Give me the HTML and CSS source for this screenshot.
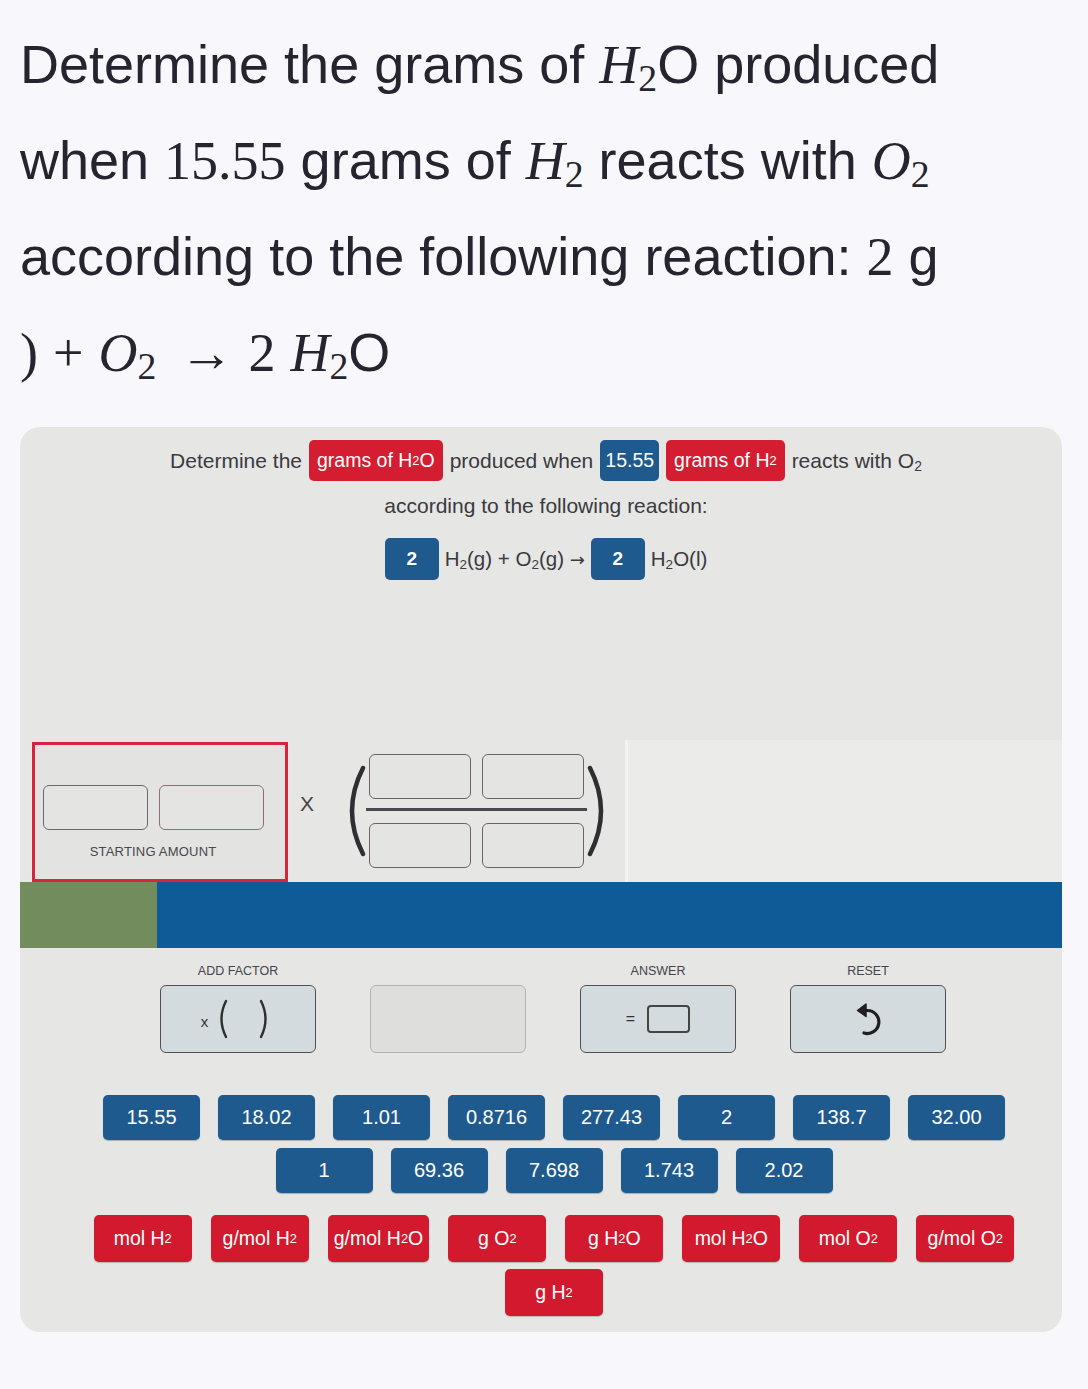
FILE: index.html
```html
<!DOCTYPE html>
<html>
<head>
<meta charset="utf-8">
<link rel="stylesheet" href="styles.css">
</head>
<body>
<div class="question">
  <div class="qline">Determine the grams of <span class="mi">H</span><span class="msub">2</span>O produced</div>
  <div class="qline">when <span class="mn">15.55</span> grams of <span class="mi">H</span><span class="msub">2</span> reacts with <span class="mi">O</span><span class="msub">2</span></div>
  <div class="qline">according to the following reaction: <span class="mn">2</span> g</div>
  <div class="qline"><span class="mn">)</span> <span class="mn">+</span> <span class="mi">O</span><span class="msub">2</span> <span class="mn arrow">→</span> <span class="mn">2</span> <span class="mi">H</span><span class="msub">2</span>O</div>
</div>

<div class="card">
  <div class="problem">
    <div class="sentence">
      <span>Determine the</span>
      <span class="chip red">grams of H<span class="sb">2</span>O</span>
      <span>produced when</span>
      <span class="chip blue num">15.55</span>
      <span class="chip red">grams of H<span class="sb">2</span></span>
      <span>reacts with O<span class="sb">2</span></span>
    </div>
    <div class="according">according to the following reaction:</div>
    <div class="equation">
      <span class="chip blue coef">2</span>
      <span>H<span class="sb">2</span>(g) + O<span class="sb">2</span>(g) <span class="eqarrow">→</span></span>
      <span class="chip blue coef">2</span>
      <span>H<span class="sb">2</span>O(l)</span>
    </div>
  </div>

  <div class="work">
    <div class="start">
      <div class="start-boxes">
        <div class="slot"></div>
        <div class="slot slot-red"></div>
      </div>
      <div class="start-label">STARTING AMOUNT</div>
    </div>
    <div class="times">X</div>
    <div class="factor">
      <svg class="paren" viewBox="0 0 30 92" width="30" height="92"><path d="M25 3 Q3 46 25 89" fill="none" stroke="#2f2f33" stroke-width="4.5" stroke-linecap="round"/></svg>
      <div class="fraction">
        <div class="frow"><div class="slot fslot"></div><div class="slot fslot"></div></div>
        <div class="fline"></div>
        <div class="frow"><div class="slot fslot"></div><div class="slot fslot"></div></div>
      </div>
      <svg class="paren" viewBox="0 0 30 92" width="30" height="92"><path d="M5 3 Q27 46 5 89" fill="none" stroke="#2f2f33" stroke-width="4.5" stroke-linecap="round"/></svg>
    </div>
    <div class="panel"></div>
  </div>

  <div class="bar">
    <div class="bar-green"></div>
    <div class="bar-blue"></div>
  </div>

  <div class="controls">
    <div class="ctl">
      <div class="ctl-label">ADD FACTOR</div>
      <div class="ctl-btn"><span class="small-x">x</span><svg class="bp" width="12" height="40" viewBox="0 0 12 40"><path d="M10 2 Q1 20 10 38" fill="none" stroke="#2e2e31" stroke-width="2.4" stroke-linecap="round"/></svg><svg class="bp bp-r" width="12" height="40" viewBox="0 0 12 40"><path d="M2 2 Q11 20 2 38" fill="none" stroke="#2e2e31" stroke-width="2.4" stroke-linecap="round"/></svg></div>
    </div>
    <div class="ctl">
      <div class="ctl-label"></div>
      <div class="ctl-btn blank"></div>
    </div>
    <div class="ctl">
      <div class="ctl-label">ANSWER</div>
      <div class="ctl-btn"><span class="eq">=</span><span class="ans-box"></span></div>
    </div>
    <div class="ctl">
      <div class="ctl-label">RESET</div>
      <div class="ctl-btn">
        <svg class="reset" width="32" height="40" viewBox="0 0 32 40"><path d="M10 10.5 H15 A11.5 11.5 0 1 1 12 33" fill="none" stroke="#1f1f22" stroke-width="3.2" stroke-linecap="round"/><path d="M14 4 L5.5 10.5 L14 16.5 Z" fill="#1f1f22" stroke="#1f1f22" stroke-width="1.5" stroke-linejoin="round"/></svg>
      </div>
    </div>
  </div>

  <div class="tiles">
    <div class="trow">
      <span class="tile blue">15.55</span><span class="tile blue">18.02</span><span class="tile blue">1.01</span><span class="tile blue">0.8716</span><span class="tile blue">277.43</span><span class="tile blue">2</span><span class="tile blue">138.7</span><span class="tile blue">32.00</span>
    </div>
    <div class="trow">
      <span class="tile blue">1</span><span class="tile blue">69.36</span><span class="tile blue">7.698</span><span class="tile blue">1.743</span><span class="tile blue">2.02</span>
    </div>
    <div class="trow red-row">
      <span class="tile red">mol H<span class="sb">2</span></span><span class="tile red">g/mol H<span class="sb">2</span></span><span class="tile red">g/mol H<span class="sb">2</span>O</span><span class="tile red">g O<span class="sb">2</span></span><span class="tile red">g H<span class="sb">2</span>O</span><span class="tile red">mol H<span class="sb">2</span>O</span><span class="tile red">mol O<span class="sb">2</span></span><span class="tile red">g/mol O<span class="sb">2</span></span>
    </div>
    <div class="trow red-row2">
      <span class="tile red">g H<span class="sb">2</span></span>
    </div>
  </div>
</div>
</body>
</html>
```

FILE: styles.css
```css
* { box-sizing: border-box; }
body {
  margin: 0;
  background: #f8f8fc;
  font-family: "Liberation Sans", Arial, sans-serif;
  color: #25242f;
}
.question {
  padding: 16px 0 0 20px;
  font-size: 54px;
  line-height: 96px;
}
.qline { white-space: nowrap; height: 96px; }
.mi { font-family: "Liberation Serif", serif; font-style: italic; }
.mn { font-family: "Liberation Serif", serif; }
.msub {
  font-family: "Liberation Serif", serif;
  font-size: 0.7em;
  vertical-align: -0.22em;
  line-height: 0;
}
.arrow { margin-left: 8px; }

.card {
  margin: 27px 0 0 20px;
  width: 1042px;
  background: #e6e6e4;
  border-radius: 20px;
  overflow: hidden;
  padding-bottom: 16px;
  color: #3a3a40;
}
.sb { font-size: 0.66em; vertical-align: -0.25em; line-height: 0; }

.problem {
  height: 313px;
  padding: 13px 0 0 10px;
  font-size: 21px;
}
.sentence, .equation {
  display: flex;
  justify-content: center;
  align-items: center;
  gap: 7px;
  white-space: nowrap;
}
.chip {
  display: inline-flex;
  align-items: center;
  justify-content: center;
  height: 41px;
  padding: 0 7px;
  border-radius: 5px;
  color: #fff;
  font-size: 19.5px;
}
.chip.red { background: #d41d31; padding: 0 8px; }
.chip.blue { background: #1e5a8d; }
.chip.num { padding: 0 5px; }
.chip.coef { width: 54px; height: 42px; font-weight: bold; font-size: 19px; }
.according {
  text-align: center;
  margin-top: 10px;
  height: 30px;
  line-height: 30px;
}
.equation { margin-top: 17px; gap: 6px; font-size: 20.5px; }
.eqarrow { font-family: "DejaVu Sans", sans-serif; font-size: 18px; }

.work {
  height: 142px;
  display: flex;
  align-items: center;
}
.start {
  margin: 2px 0 0 12px;
  width: 256px;
  height: 140px;
  border: 3px solid #d8243d;
  background: #e3e3e1;
  padding: 40px 0 0 8px;
}
.start-boxes { display: flex; gap: 11px; }
.slot {
  width: 105px;
  height: 45px;
  border: 1.5px solid #6a6a6e;
  border-radius: 6px;
  background: #e4e4e2;
}
.slot-red { border-color: #8d6f72; }
.start-label {
  margin-top: 14px;
  width: 220px;
  text-align: center;
  font-size: 13px;
  color: #47474c;
  letter-spacing: 0.2px;
}
.times {
  margin-left: 12px;
  font-size: 21px;
  color: #444;
  margin-top: -14px;
}
.factor {
  margin-left: 24px;
  display: flex;
  align-items: center;
}
.paren { display: block; }
.fraction { margin: 0 1px; }
.frow { display: flex; gap: 11px; }
.fslot { width: 102px; height: 45px; border-color: #6e6363; }
.fline {
  height: 3px;
  background: #4a4a4e;
  margin: 9px -3px 12px -3px;
}
.panel {
  flex: 1;
  align-self: stretch;
  margin-left: 10px;
  background: #ebebe9;
  border-left: 3px solid #f3f3f1;
}

.bar { display: flex; height: 66px; }
.bar-green { width: 137px; background: #728c5d; }
.bar-blue { flex: 1; background: #0f5b98; }

.controls {
  display: flex;
  gap: 54px;
  padding: 16px 0 0 140px;
}
.ctl { width: 156px; }
.ctl-label {
  height: 19px;
  text-align: center;
  font-size: 12.5px;
  color: #44444a;
}
.ctl-btn {
  margin-top: 2px;
  height: 68px;
  border: 1.5px solid #505054;
  border-radius: 6px;
  background: #d3dbde;
  display: flex;
  align-items: center;
  justify-content: center;
  color: #333;
}
.ctl-btn.blank { background: #dededd; border-color: #b3b3b3; }
.small-x { font-size: 15px; margin-right: 8px; margin-top: 4px; }
.bp { display: block; }
.bp-r { margin-left: 31px; margin-right: 4px; }
.eq { font-size: 16px; margin-right: 12px; }
.ans-box {
  width: 43px;
  height: 28px;
  border: 2px solid #444;
  border-radius: 4px;
}
.reset { display: block; margin-top: 2px; }

.tiles {
  margin-top: 42px;
  padding-left: 26px;
  display: flex;
  flex-direction: column;
  gap: 8px;
}
.trow {
  display: flex;
  justify-content: center;
  gap: 18px;
}
.red-row { margin-top: 14px; gap: 19px; }
.red-row2 { margin-top: -1px; }
.tile {
  min-width: 97px;
  height: 45px;
  display: inline-flex;
  align-items: center;
  justify-content: center;
  padding: 0 6px;
  border-radius: 5px;
  color: #fff;
  font-size: 20px;
  white-space: nowrap;
}
.tile.blue { background: #1f5a8e; box-shadow: 0 1px 1px rgba(0,0,0,0.25); }
.tile.red { background: #d2192d; height: 47px; min-width: 98px; font-size: 19.5px; box-shadow: 0 1px 1px rgba(0,0,0,0.2); }
```
